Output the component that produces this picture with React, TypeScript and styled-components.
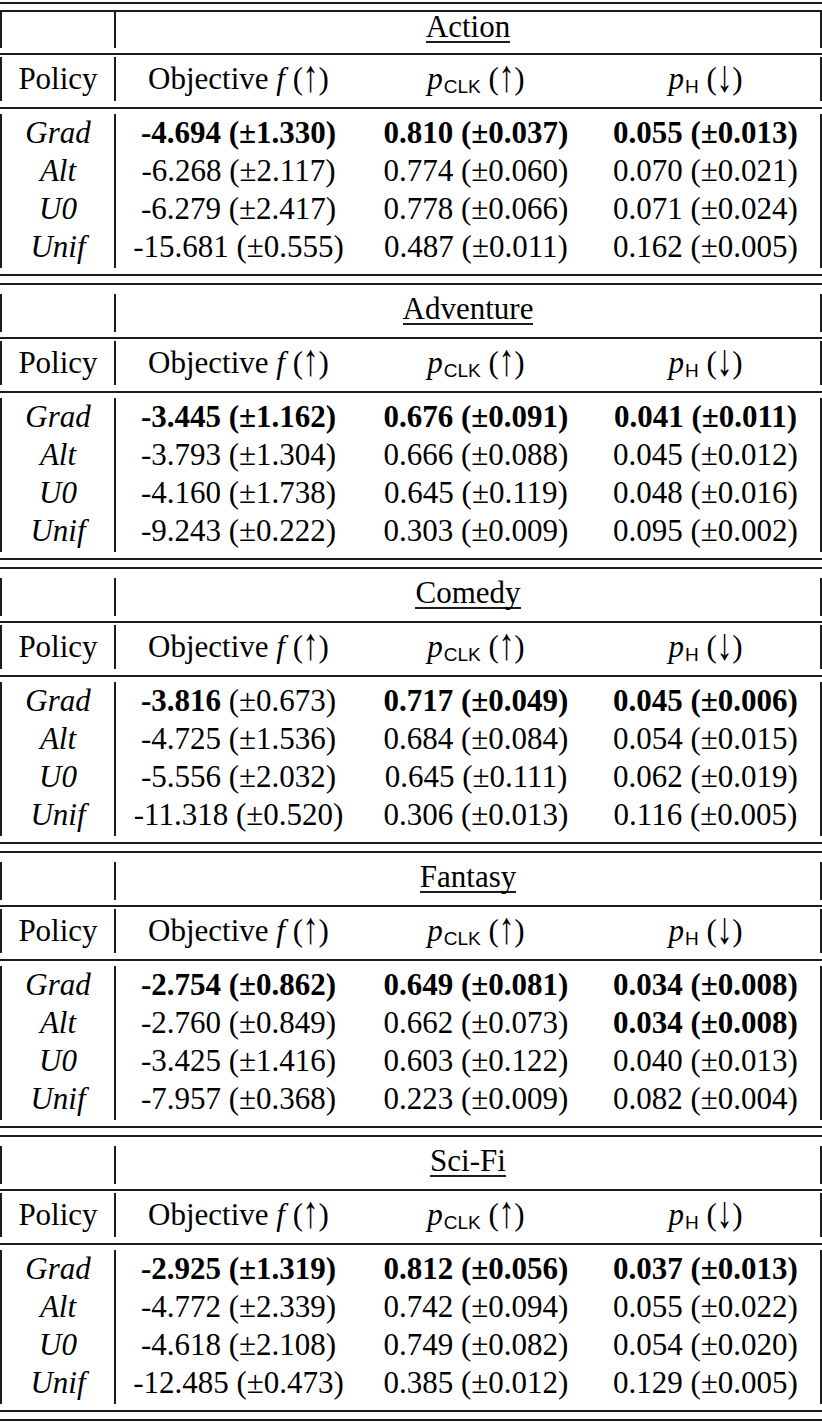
import React from 'react';
import styled, { createGlobalStyle } from 'styled-components';

const INK = '#1c1c1c';
const COLS = '114px 245px 230px 1fr';

type Section = {
  genre: string;
  rows: [string, string, string, string][];
};

// '**' marks the bold part of a value
const SECTIONS: Section[] = [
  {
    genre: 'Action',
    rows: [
      ['Grad', '**-4.694 (±1.330)**', '**0.810 (±0.037)**', '**0.055 (±0.013)**'],
      ['Alt', '-6.268 (±2.117)', '0.774 (±0.060)', '0.070 (±0.021)'],
      ['U0', '-6.279 (±2.417)', '0.778 (±0.066)', '0.071 (±0.024)'],
      ['Unif', '-15.681 (±0.555)', '0.487 (±0.011)', '0.162 (±0.005)'],
    ],
  },
  {
    genre: 'Adventure',
    rows: [
      ['Grad', '**-3.445 (±1.162)**', '**0.676 (±0.091)**', '**0.041 (±0.011)**'],
      ['Alt', '-3.793 (±1.304)', '0.666 (±0.088)', '0.045 (±0.012)'],
      ['U0', '-4.160 (±1.738)', '0.645 (±0.119)', '0.048 (±0.016)'],
      ['Unif', '-9.243 (±0.222)', '0.303 (±0.009)', '0.095 (±0.002)'],
    ],
  },
  {
    genre: 'Comedy',
    rows: [
      ['Grad', '**-3.816** (±0.673)', '**0.717 (±0.049)**', '**0.045 (±0.006)**'],
      ['Alt', '-4.725 (±1.536)', '0.684 (±0.084)', '0.054 (±0.015)'],
      ['U0', '-5.556 (±2.032)', '0.645 (±0.111)', '0.062 (±0.019)'],
      ['Unif', '-11.318 (±0.520)', '0.306 (±0.013)', '0.116 (±0.005)'],
    ],
  },
  {
    genre: 'Fantasy',
    rows: [
      ['Grad', '**-2.754 (±0.862)**', '**0.649 (±0.081)**', '**0.034 (±0.008)**'],
      ['Alt', '-2.760 (±0.849)', '0.662 (±0.073)', '**0.034 (±0.008)**'],
      ['U0', '-3.425 (±1.416)', '0.603 (±0.122)', '0.040 (±0.013)'],
      ['Unif', '-7.957 (±0.368)', '0.223 (±0.009)', '0.082 (±0.004)'],
    ],
  },
  {
    genre: 'Sci-Fi',
    rows: [
      ['Grad', '**-2.925 (±1.319)**', '**0.812 (±0.056)**', '**0.037 (±0.013)**'],
      ['Alt', '-4.772 (±2.339)', '0.742 (±0.094)', '0.055 (±0.022)'],
      ['U0', '-4.618 (±2.108)', '0.749 (±0.082)', '0.054 (±0.020)'],
      ['Unif', '-12.485 (±0.473)', '0.385 (±0.012)', '0.129 (±0.005)'],
    ],
  },
];

function Value({ text }: { text: string }) {
  return (
    <>
      {text.split('**').map((part, i) =>
        i % 2 ? <Bold key={i}>{part}</Bold> : <span key={i}>{part}</span>
      )}
    </>
  );
}

function Dir({ up }: { up: boolean }) {
  return (
    <>
      (<Arrow>{up ? '↑' : '↓'}</Arrow>)
    </>
  );
}

function Block({ section, first }: { section: Section; first: boolean }) {
  const headH = first ? 36 : 38;
  return (
    <>
      <Band $top={first ? 0 : 9} $bottom={5}>
        <Frame $cols="114px 1fr">
          <TitleCell $sep $h={headH} />
          <TitleCell $h={headH}>
            <Genre>{section.genre}</Genre>
          </TitleCell>
        </Frame>
      </Band>
      <Rule />
      <Band $top={2} $bottom={6}>
        <Frame $cols={COLS}>
          <HeadCell $sep>Policy</HeadCell>
          <HeadCell>
            Objective <Ital>f</Ital> <Dir up />
          </HeadCell>
          <HeadCell>
            <Ital>p</Ital>
            <Sub>CLK</Sub> <Dir up />
          </HeadCell>
          <HeadCell>
            <Ital>p</Ital>
            <Sub>H</Sub> <Dir up={false} />
          </HeadCell>
        </Frame>
      </Band>
      <Rule />
      <Band $top={5} $bottom={6}>
        <Frame $cols={COLS}>
          {section.rows.map((row, r) => {
            const h = r === section.rows.length - 1 ? 40 : 38;
            return (
              <React.Fragment key={row[0]}>
                <Cell $sep $h={h}>
                  <Ital>{row[0]}</Ital>
                </Cell>
                {row.slice(1).map((v, c) => (
                  <Cell key={c} $h={h}>
                    <Value text={v} />
                  </Cell>
                ))}
              </React.Fragment>
            );
          })}
        </Frame>
      </Band>
      <Rule />
      <Rule $gap={7} />
    </>
  );
}

export default function App() {
  return (
    <>
      <GlobalStyle />
      <Sheet>
        <Rule />
        <Rule $gap={6} />
        {SECTIONS.map((s, i) => (
          <Block key={s.genre} section={s} first={i === 0} />
        ))}
      </Sheet>
    </>
  );
}

const GlobalStyle = createGlobalStyle`
  html, body {
    margin: 0;
    background: #fff;
  }
  body {
    font-family: "Liberation Serif", "Times New Roman", serif;
    color: #000;
  }
`;

const Sheet = styled.div`
  width: 822px;
  padding-top: 2px;
  font-size: 31px;
`;

const Rule = styled.div<{ $gap?: number }>`
  height: 2px;
  background: ${INK};
  margin-top: ${(p) => p.$gap ?? 0}px;
`;

const Band = styled.div<{ $top: number; $bottom: number }>`
  padding: ${(p) => p.$top}px 0 ${(p) => p.$bottom}px;
`;

const Frame = styled.div<{ $cols: string }>`
  display: grid;
  grid-template-columns: ${(p) => p.$cols};
  border-left: 2px solid ${INK};
  border-right: 2px solid ${INK};
`;

const Cell = styled.div<{ $sep?: boolean; $h?: number }>`
  height: ${(p) => p.$h ?? 38}px;
  line-height: 38px;
  text-align: center;
  white-space: nowrap;
  border-right: ${(p) => (p.$sep ? `2px solid ${INK}` : 'none')};
`;

const TitleCell = styled(Cell)`
  line-height: 29px;
`;

const HeadCell = styled.div<{ $sep?: boolean }>`
  height: 44px;
  line-height: 44px;
  text-align: center;
  white-space: nowrap;
  border-right: ${(p) => (p.$sep ? `2px solid ${INK}` : 'none')};
`;

const Genre = styled.span`
  display: inline-block;
  line-height: 29px;
  border-bottom: 2px solid ${INK};
`;

const Ital = styled.i`
  font-style: italic;
`;

const Bold = styled.b`
  font-weight: 700;
`;

/* the typeset arrow is taller and thinner than the font's own */
const Arrow = styled.span`
  display: inline-block;
  line-height: 1;
  transform: scale(1.05, 1.45);
  transform-origin: 50% 72%;
`;

const Sub = styled.span`
  font-family: "Liberation Sans", sans-serif;
  font-size: 19px;
  vertical-align: -4px;
  line-height: 0;
  margin-left: 1px;
`;
